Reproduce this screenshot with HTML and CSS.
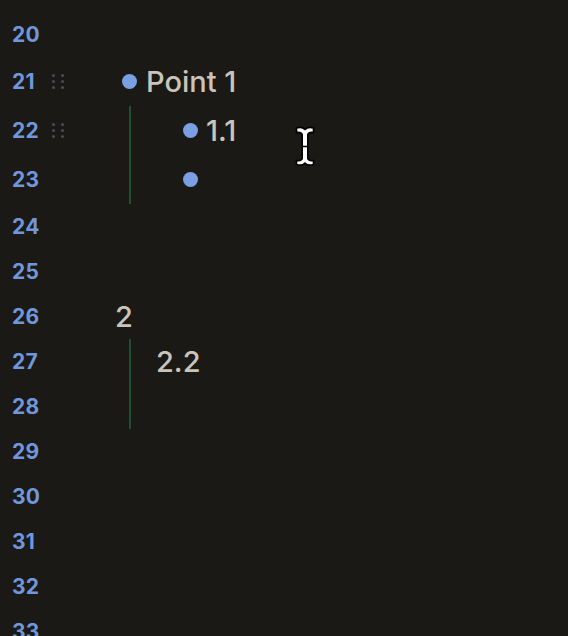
FILE: index.html
```
<!DOCTYPE html>
<html>
<head>
<meta charset="utf-8">
<link rel="stylesheet" href="styles.css">
</head>
<body>
<div class="editor">
  <div class="row"><div class="gutter"><span class="ln">20</span></div><div class="body"></div></div>
  <div class="row tall"><div class="gutter"><span class="ln">21</span><span class="grip"><i></i><i></i><i></i><i></i><i></i><i></i></span></div><div class="body l1"><span class="dot"></span><span class="txt">Point 1</span></div></div>
  <div class="row tall"><div class="gutter"><span class="ln">22</span><span class="grip"><i></i><i></i><i></i><i></i><i></i><i></i></span></div><div class="body guide"><span class="dot d2"></span><span class="txt">1.1</span></div></div>
  <div class="row tall"><div class="gutter"><span class="ln">23</span></div><div class="body guide"><span class="dot d2"></span></div></div>
  <div class="row"><div class="gutter"><span class="ln">24</span></div><div class="body"></div></div>
  <div class="row"><div class="gutter"><span class="ln">25</span></div><div class="body"></div></div>
  <div class="row"><div class="gutter"><span class="ln">26</span></div><div class="body para"><span class="txt">2</span></div></div>
  <div class="row"><div class="gutter"><span class="ln">27</span></div><div class="body guide"><span class="txt sub">2.2</span></div></div>
  <div class="row"><div class="gutter"><span class="ln">28</span></div><div class="body guide"></div></div>
  <div class="row"><div class="gutter"><span class="ln">29</span></div><div class="body"></div></div>
  <div class="row"><div class="gutter"><span class="ln">30</span></div><div class="body"></div></div>
  <div class="row"><div class="gutter"><span class="ln">31</span></div><div class="body"></div></div>
  <div class="row"><div class="gutter"><span class="ln">32</span></div><div class="body"></div></div>
  <div class="row"><div class="gutter"><span class="ln">33</span></div><div class="body"></div></div>
</div>
<svg class="cursor" width="22" height="42" viewBox="0 0 22 42">
  <path d="M2.5 3 C6 1.8 9 2.2 11 4.5 C13 2.2 16 1.8 19.5 3 L19.5 7.5 C16.5 7 14.5 7.6 13.8 9.5 L13.8 33.5 C14.5 35.4 16.5 36 19.5 35.5 L19.5 39.5 C16 40.7 13 40.3 11 38 C9 40.3 6 40.7 2.5 39.5 L2.5 35.5 C5.5 36 7.5 35.4 8.2 33.5 L8.2 9.5 C7.5 7.6 5.5 7 2.5 7.5 Z" fill="#ffffff" stroke="#000000" stroke-width="1.6" stroke-linejoin="round"/>
  <line x1="8.2" y1="21.5" x2="13.8" y2="21.5" stroke="#000000" stroke-width="1.6"/>
</svg>
</body>
</html>
```
FILE: styles.css
```
html, body {
  margin: 0;
  padding: 0;
  background: #1b1915;
  height: 100%;
  overflow: hidden;
}
.editor {
  padding-top: 12px;
  font-family: Inter, "Noto Sans", sans-serif;
}
.row {
  display: grid;
  grid-template-columns: 100px 1fr;
  height: 45px;
}
.row.tall {
  height: 49px;
}
.gutter {
  display: flex;
  align-items: center;
}
.ln {
  width: 40px;
  padding-left: 12px;
  box-sizing: border-box;
  color: #7097dc;
  font-weight: 700;
  font-size: 21px;
  letter-spacing: 0.3px;
}
.grip {
  display: grid;
  grid-template-columns: 3px 3px;
  column-gap: 6px;
  row-gap: 3px;
  margin-left: 12px;
}
.grip i {
  width: 3px;
  height: 3px;
  border-radius: 50%;
  background: #4a4c58;
}
.body {
  display: flex;
  align-items: center;
}
.txt {
  color: #c9c5ba;
  font-size: 29px;
  font-weight: 500;
}
.dot {
  width: 15px;
  height: 15px;
  border-radius: 50%;
  background: #7a9fe2;
  flex: none;
}
.l1 .dot {
  margin-left: 22px;
  margin-right: 9px;
}
.guide {
  margin-left: 29px;
  border-left: 2px solid #22502c;
}
.guide .d2 {
  margin-left: 52px;
  margin-right: 8px;
}
.para .txt {
  margin-left: 15px;
}
.txt.sub {
  margin-left: 25px;
}
.cursor {
  position: absolute;
  left: 294px;
  top: 125px;
}
```
